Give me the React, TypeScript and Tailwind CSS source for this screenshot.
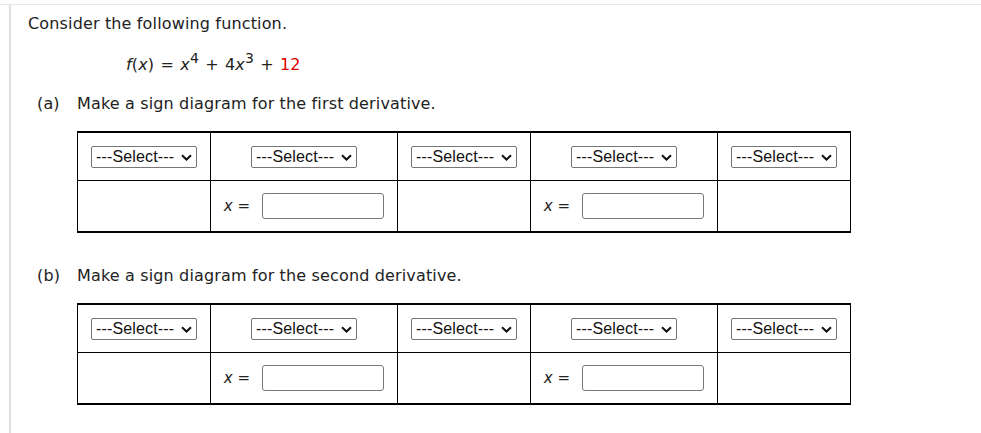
import React from "react";

const font = { fontFamily: '"DejaVu Sans", Verdana, sans-serif' };

function SelectBox() {
  return (
    <div className="relative inline-block align-middle">
      <select
        defaultValue=""
        className="appearance-none block w-[106px] h-[22px] border border-[#767676] rounded-[2px] bg-white pl-[4px] text-[16px] leading-[20px] text-[#111] font-['Liberation_Sans',Arial,sans-serif]"
      >
        <option value="">---Select---</option>
        <option value="+">+</option>
        <option value="-">-</option>
      </select>
      <svg
        className="absolute right-[5px] top-[8px] pointer-events-none"
        width="11"
        height="7"
        viewBox="0 0 11 7"
      >
        <path d="M1 1.2 L5.5 5.5 L10 1.2" fill="none" stroke="#111" strokeWidth="2" />
      </svg>
    </div>
  );
}

function XInput() {
  return (
    <div className="flex items-center justify-center">
      <span className="text-[15px] text-[#222]">
        <i>x</i> =
      </span>
      <input
        type="text"
        className="ml-[12px] w-[122px] h-[26px] border border-[#767676] rounded-[3px] bg-white"
      />
    </div>
  );
}

function SignTable() {
  const widths = ["w-[133px]", "w-[187px]", "w-[133px]", "w-[187px]", "w-[133px]"];
  return (
    <table className="border-collapse border-t-2 border-b-2 border-black">
      <tbody>
        <tr>
          {widths.map((w, i) => (
            <td key={i} className={`${w} h-[48px] border border-black text-center align-middle p-0`}>
              <SelectBox />
            </td>
          ))}
        </tr>
        <tr>
          {widths.map((w, i) => (
            <td key={i} className={`${w} h-[52px] border border-black text-center align-middle p-0`}>
              {i === 1 || i === 3 ? <XInput /> : null}
            </td>
          ))}
        </tr>
      </tbody>
    </table>
  );
}

export default function App() {
  return (
    <div className="bg-white w-[981px] h-[433px] overflow-hidden pt-[4px]" style={font}>
      <div className="border-t border-[#e6e6e6]">
        <div className="ml-[9px] border-l-2 border-[#e0e0e0] h-[430px] pl-[17px] pt-[9px] text-[16px] tracking-[0.15px] text-[#222]">
          <p className="leading-[20px]">Consider the following function.</p>
          <p className="mt-[21px] ml-[98px] leading-[20px] [word-spacing:1px]">
            <i>f</i>(<i>x</i>) = <i>x</i>
            <sup className="text-[14px]">4</sup> + 4<i>x</i>
            <sup className="text-[14px]">3</sup> + <span className="text-[#e00000]">12</span>
          </p>
          <div className="mt-[19px] flex leading-[20px]">
            <span className="w-[49px] pl-[9px]">(a)</span>
            <span>Make a sign diagram for the first derivative.</span>
          </div>
          <div className="mt-[17px] ml-[49px]">
            <SignTable />
          </div>
          <div className="mt-[33px] flex leading-[20px]">
            <span className="w-[49px] pl-[9px]">(b)</span>
            <span>Make a sign diagram for the second derivative.</span>
          </div>
          <div className="mt-[17px] ml-[49px]">
            <SignTable />
          </div>
        </div>
      </div>
    </div>
  );
}
